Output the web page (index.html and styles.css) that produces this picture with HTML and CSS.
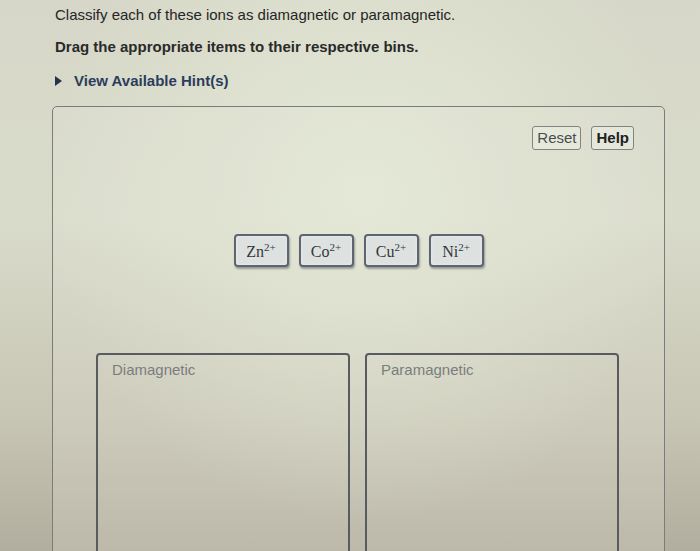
FILE: index.html
```html
<!DOCTYPE html>
<html>
<head>
<meta charset="utf-8">
<link rel="stylesheet" href="styles.css">
</head>
<body>
<div class="page">
  <p class="q">Classify each of these ions as diamagnetic or paramagnetic.</p>
  <p class="instr">Drag the appropriate items to their respective bins.</p>
  <div class="hint"><span class="tri"></span><span>View Available Hint(s)</span></div>
  <div class="panel">
    <div class="tools">
      <span class="btn reset">Reset</span>
      <span class="btn help">Help</span>
    </div>
    <div class="tiles">
      <span class="tile"><span>Zn<sup>2+</sup></span></span>
      <span class="tile"><span>Co<sup>2+</sup></span></span>
      <span class="tile"><span>Cu<sup>2+</sup></span></span>
      <span class="tile"><span>Ni<sup>2+</sup></span></span>
    </div>
    <div class="bins">
      <div class="bin"><span class="label">Diamagnetic</span></div>
      <div class="bin"><span class="label">Paramagnetic</span></div>
    </div>
  </div>
</div>
</body>
</html>
```
FILE: styles.css
```css
html, body {
  margin: 0;
  height: 100%;
  overflow: hidden;
}
body {
  font-family: "Liberation Sans", Arial, sans-serif;
  background:
    radial-gradient(ellipse 45% 60% at 52% 35%, rgba(232,238,218,0.75), rgba(232,238,218,0) 100%),
    linear-gradient(to bottom, #d6d7c8 0%, #d9dbca 40%, #c8c6b5 75%, #b2ae9f 100%);
}
.page {
  padding: 0 0 0 55px;
}
.q {
  margin: 0;
  padding-top: 6px;
  font-size: 15px;
  line-height: 17px;
  color: #262626;
}
.instr {
  margin: 15px 0 0;
  font-size: 15px;
  line-height: 17px;
  font-weight: bold;
  color: #2a2a2a;
}
.hint {
  margin-top: 17px;
  display: flex;
  align-items: center;
  gap: 12px;
  font-size: 15px;
  line-height: 17px;
  font-weight: bold;
  color: #2b3c5c;
}
.tri {
  width: 0;
  height: 0;
  border-top: 5px solid transparent;
  border-bottom: 5px solid transparent;
  border-left: 7px solid #26334d;
}
.panel {
  margin: 17px 0 0 -3px;
  width: 611px;
  height: 470px;
  border: 1.5px solid #7a7c7a;
  border-radius: 5px;
  background: rgba(230,232,218,0.2);
}
.tools {
  display: flex;
  justify-content: flex-end;
  gap: 10px;
  padding: 19px 30px 0 0;
}
.btn {
  display: inline-block;
  height: 22px;
  line-height: 22px;
  padding: 0 4px;
  border: 1px solid #808582;
  border-radius: 3px;
  font-size: 15px;
  background: rgba(238,240,230,0.5);
}
.reset { color: #4a4d50; }
.help { color: #1e2022; font-weight: bold; }
.tiles {
  display: flex;
  justify-content: center;
  gap: 10px;
  margin-top: 84px;
}
.tile {
  box-sizing: border-box;
  width: 55px;
  height: 33px;
  border: 2px solid #5d6670;
  border-radius: 4px;
  background: #dde1df;
  box-shadow: 1px 2px 2px rgba(60,70,80,0.45), inset 0 0 3px rgba(255,255,255,0.6);
  font-family: "Liberation Serif", "Times New Roman", serif;
  font-size: 16px;
  color: #34373a;
  display: flex;
  align-items: center;
  justify-content: center;
  padding-top: 2px;
}
.tile sup {
  font-size: 11px;
  line-height: 0;
  vertical-align: 6px;
}
.bins {
  display: flex;
  justify-content: center;
  gap: 15px;
  margin-top: 86px;
  padding-right: 2px;
}
.bin {
  box-sizing: border-box;
  width: 254px;
  height: 220px;
  border: 2px solid #585c60;
  border-radius: 4px;
  padding: 6px 0 0 14px;
}
.label {
  font-size: 15px;
  color: #7a7d7e;
}
```
